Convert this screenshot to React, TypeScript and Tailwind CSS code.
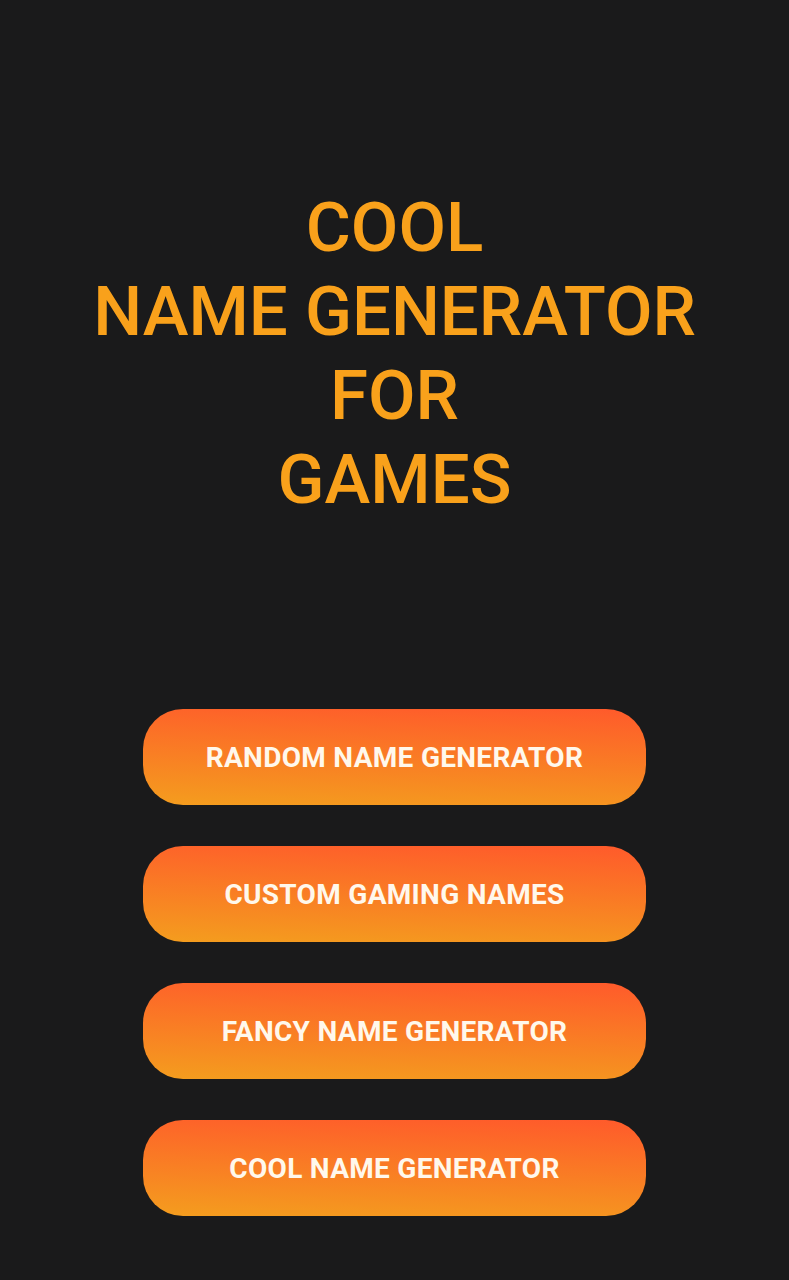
const buttons = [
  'RANDOM NAME GENERATOR',
  'CUSTOM GAMING NAMES',
  'FANCY NAME GENERATOR',
  'COOL NAME GENERATOR',
]

export default function App() {
  return (
    <div className="min-h-[1280px] bg-[#1a1a1b] flex flex-col items-center font-['Roboto',sans-serif]">
      {/* title */}
      <h1 className="pt-[186px] text-center text-[69px] leading-[84px] font-medium text-[#f9a11b]">
        COOL
        <br />
        NAME GENERATOR
        <br />
        FOR
        <br />
        GAMES
      </h1>

      <div className="mt-[187px] flex flex-col gap-[41px]">
        {buttons.map((label) => (
          <button
            key={label}
            className="w-[503px] h-[96px] rounded-[40px] bg-linear-[182deg] from-[#ff5a2b] to-[#f49d1e] text-[#fff8ec] text-[28px] font-bold tracking-[0.3px] pt-[2px]"
          >
            {label}
          </button>
        ))}
      </div>
    </div>
  )
}
